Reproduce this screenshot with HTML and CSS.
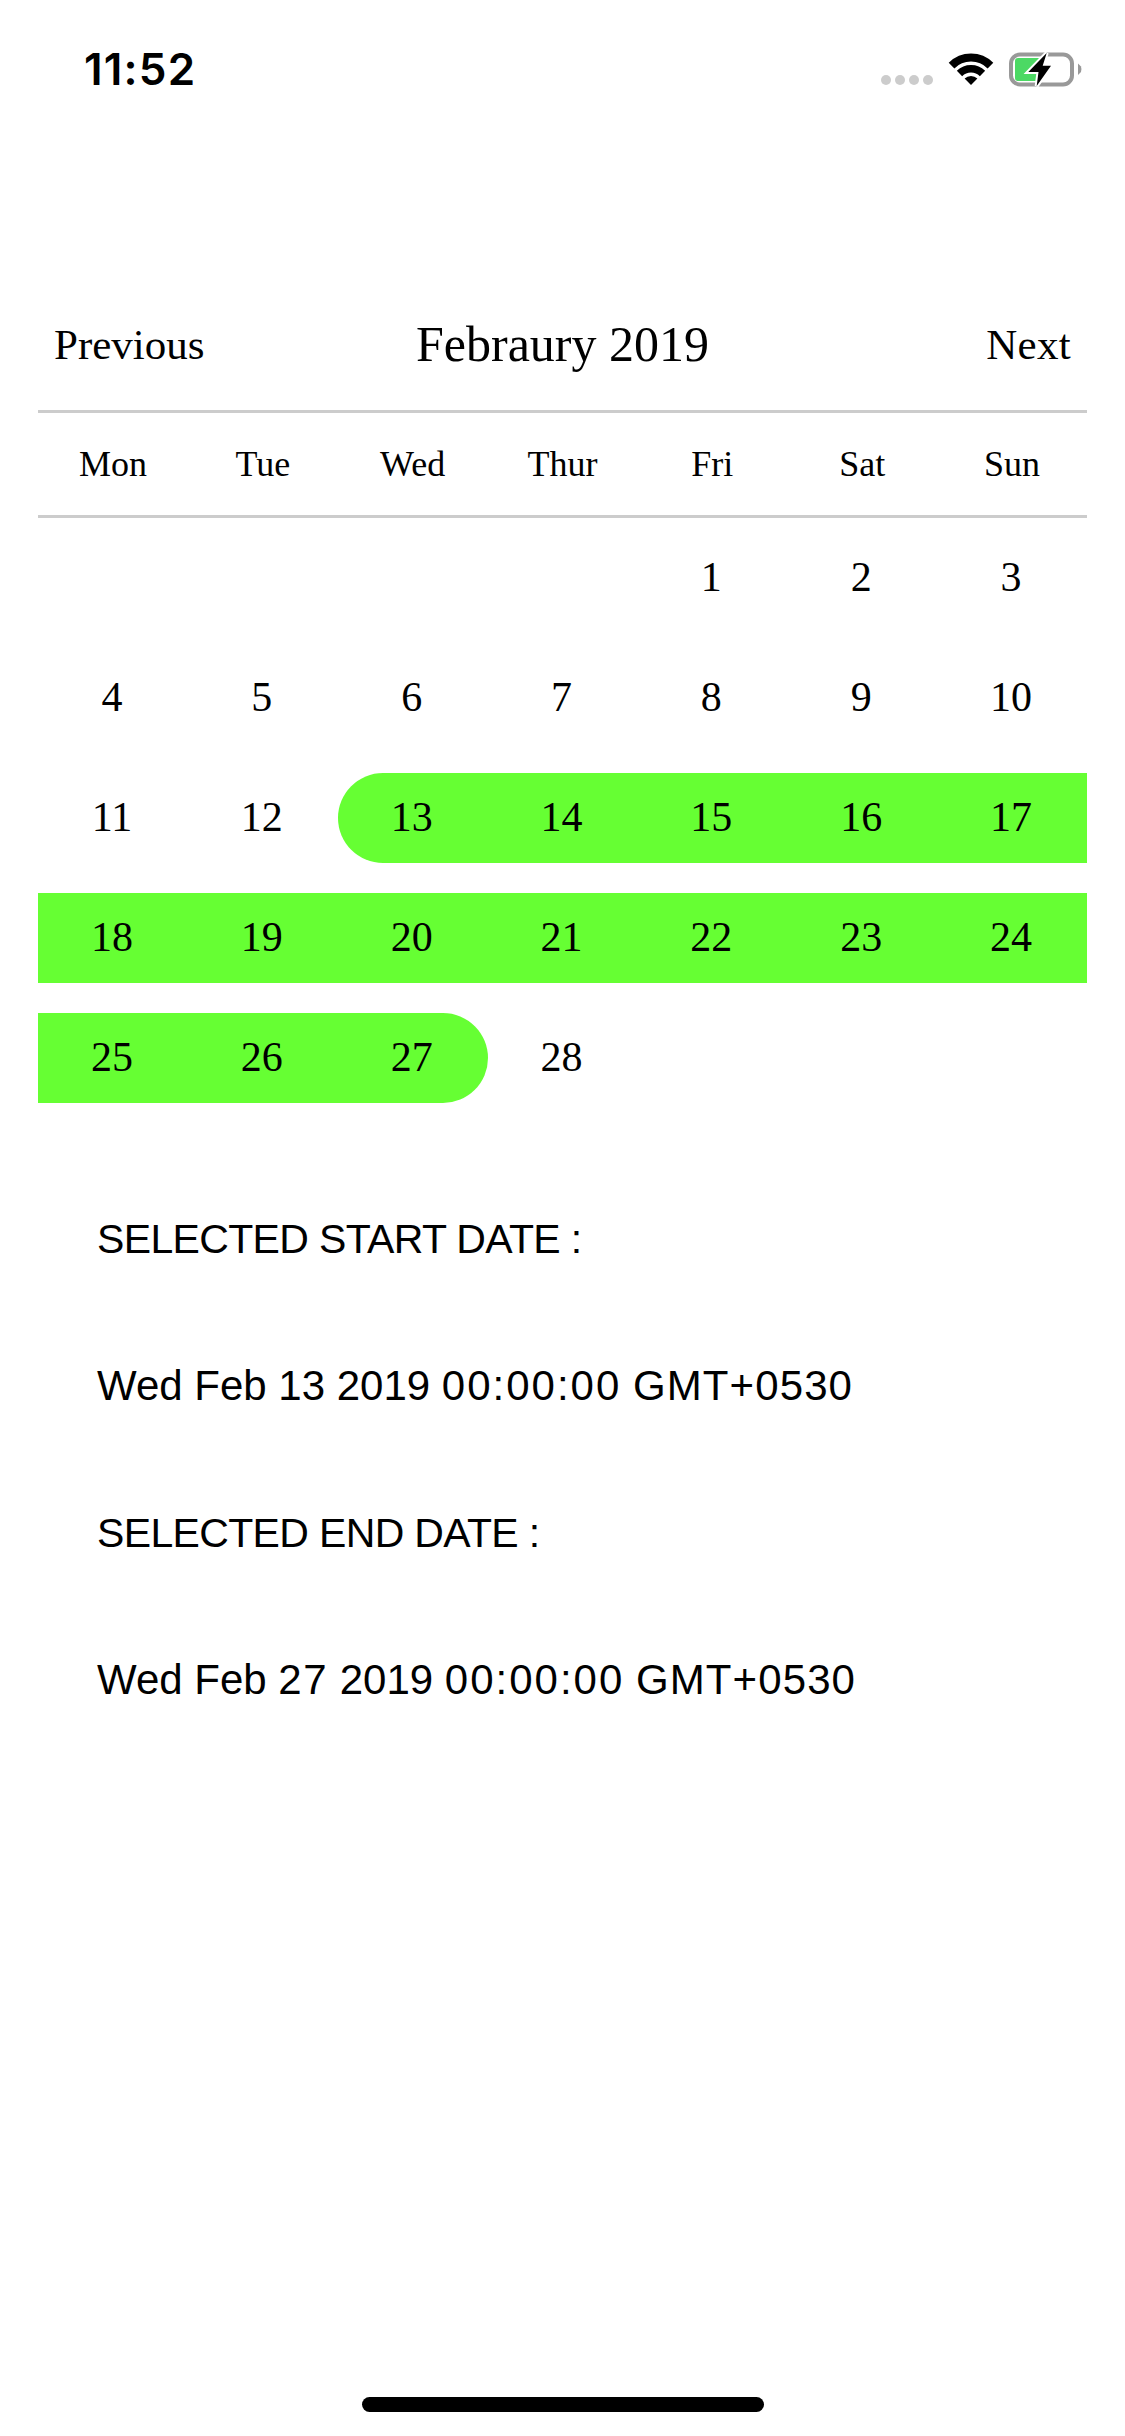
FILE: index.html
```html
<!DOCTYPE html>
<html lang="en">

<head>
    <meta charset="UTF-8">
    <meta name="viewport" content="width=device-width, initial-scale=1.0">
    <title>Calendar</title>
    <link rel="stylesheet" href="styles.css">
</head>

<body>
    <div class="screen">
        <div class="status-bar">
            <span class="time">11:52</span>
            <div class="status-icons">
                <div class="signal">
                    <i></i><i></i><i></i><i></i>
                </div>
                <svg class="wifi" width="46" height="32" viewBox="0 0 46 32">
                    <path d="M3.55 12.55A27.5 27.5 0 0 1 42.45 12.55" fill="none" stroke="#000" stroke-width="8"/>
                    <path d="M11.5 20.5A16.25 16.25 0 0 1 34.5 20.5" fill="none" stroke="#000" stroke-width="7.5"/>
                    <path d="M23 32L16.6 25.6A9 9 0 0 1 29.4 25.6Z" fill="#000"/>
                </svg>
                <svg class="battery" width="73" height="35" viewBox="0 0 73 35">
                    <rect x="2" y="2.5" width="61" height="30" rx="9" fill="none" stroke="#999" stroke-width="4"/>
                    <path d="M69 11.5L72 14.5Q73 17.25 72 20L69 23Z" fill="#999"/>
                    <rect x="6" y="6" width="26" height="23" rx="3" fill="#4cd964"/>
                    <path d="M37.7 1L19.3 20H29.5L27.7 34L42 13.7H33.7Z" fill="#000" stroke="#fff" stroke-width="4" paint-order="stroke"/>
                </svg>
            </div>
        </div>

        <div class="calendar">
            <div class="cal-head">
                <a class="prev">Previous</a>
                <span class="month">Febraury 2019</span>
                <a class="next">Next</a>
            </div>
            <div class="weekdays">
                <span>Mon</span>
                <span>Tue</span>
                <span>Wed</span>
                <span>Thur</span>
                <span>Fri</span>
                <span>Sat</span>
                <span>Sun</span>
            </div>
            <div class="days">
                <span></span>
                <span></span>
                <span></span>
                <span></span>
                <span>1</span>
                <span>2</span>
                <span>3</span>
                <span>4</span>
                <span>5</span>
                <span>6</span>
                <span>7</span>
                <span>8</span>
                <span>9</span>
                <span>10</span>
                <span>11</span>
                <span>12</span>
                <span class="on start">13</span>
                <span class="on">14</span>
                <span class="on">15</span>
                <span class="on">16</span>
                <span class="on">17</span>
                <span class="on">18</span>
                <span class="on">19</span>
                <span class="on">20</span>
                <span class="on">21</span>
                <span class="on">22</span>
                <span class="on">23</span>
                <span class="on">24</span>
                <span class="on">25</span>
                <span class="on">26</span>
                <span class="on end">27</span>
                <span>28</span>
            </div>
        </div>

        <div class="selected">
            <p class="label">SELECTED START DATE :</p>
            <p class="date">Wed Feb 13 2019 <span class="clock">00:00:00</span> <span class="zone">GMT+0530</span></p>
            <p class="label">SELECTED END DATE :</p>
            <p class="date">Wed Feb <span class="wide">27</span> 2019 <span class="clock">00:00:00</span> <span class="zone">GMT+0530</span></p>
        </div>

        <div class="home-bar"></div>
    </div>
</body>

</html>
```

FILE: styles.css
```css
* {
    margin: 0;
    padding: 0;
    box-sizing: border-box;
}

body {
    background-color: #fff;
    color: #000;
    font-family: "Liberation Serif", serif;
}

.screen {
    display: flex;
    flex-direction: column;
    width: 1125px;
    height: 2436px;
}

.status-bar {
    display: flex;
    justify-content: space-between;
    align-items: center;
    height: 138px;
    padding: 0 43px 0 84px;
}

.time {
    font-family: Inter, "Liberation Sans", sans-serif;
    font-size: 44px;
    font-weight: 600;
    letter-spacing: 1.2px;
}

.status-icons {
    display: flex;
    align-items: flex-end;
}

.signal {
    display: flex;
    gap: 4px;
    margin-bottom: 2px;
}

.signal i {
    width: 10px;
    height: 10px;
    border-radius: 50%;
    background-color: #ccc;
}

.wifi {
    margin: 0 15px 2px 15px;
}

.calendar {
    margin: 162px 38px 0;
}

.cal-head {
    display: grid;
    grid-template-columns: 1fr auto 1fr;
    align-items: center;
    height: 113px;
    padding: 0 16px 21px;
    border-bottom: 3px solid #ccc;
    font-size: 43px;
}

.month {
    padding-bottom: 2px;
    font-size: 50px;
}

.next {
    text-align: right;
    letter-spacing: 0.3px;
}

.weekdays {
    display: grid;
    grid-template-columns: repeat(7, 1fr);
    align-items: center;
    height: 105px;
    border-bottom: 3px solid #ccc;
    font-size: 36px;
    text-align: center;
}

.days {
    display: grid;
    grid-template-columns: repeat(7, 1fr);
    grid-auto-rows: 90px;
    row-gap: 30px;
    margin-top: 15px;
    font-size: 42px;
    line-height: 88px;
    text-align: center;
}

.days span {
    padding-right: 2px;
}

.days .on {
    background-color: #66ff33;
}

.days .start {
    border-radius: 45px 0 0 45px;
}

.days .end {
    border-radius: 0 45px 45px 0;
}

.selected {
    display: flex;
    flex-direction: column;
    gap: 99px;
    padding: 112px 0 0 97px;
    font-family: "Liberation Sans", sans-serif;
    line-height: 48px;
}

.label {
    font-size: 41px;
    letter-spacing: -0.65px;
}

.date {
    font-size: 42px;
}

.clock {
    letter-spacing: 2px;
}

.zone {
    letter-spacing: 1.1px;
}

.wide {
    letter-spacing: 1.5px;
}

.home-bar {
    width: 402px;
    height: 15px;
    margin: auto auto 24px;
    border-radius: 8px;
    background-color: #000;
}
```
